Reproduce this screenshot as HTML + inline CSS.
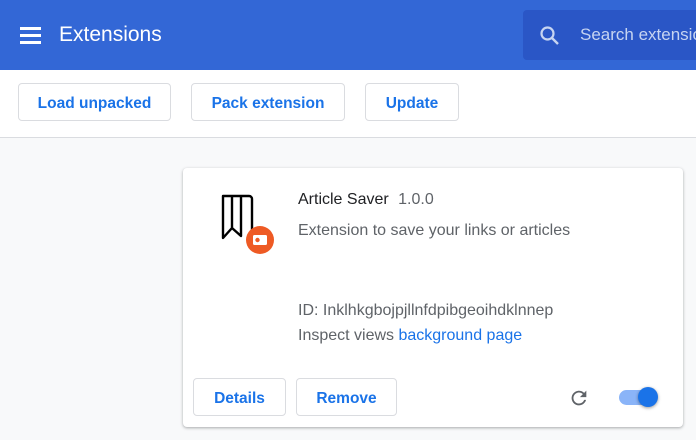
<!DOCTYPE html><html><head><style>
body{margin:0;width:696px;height:440px;overflow:hidden;background:#f8f9fa;font-family:"Liberation Sans",sans-serif;position:relative}
.hd{position:absolute;left:0;top:0;width:696px;height:70px;background:#3367d6}
.ttl{position:absolute;left:59px;top:23px;color:#fff;font-size:21px}
.sb{position:absolute;left:523px;top:10px;width:200px;height:50px;background:#2a56c6;border-radius:4px}
.sb span{position:absolute;left:57px;top:15px;color:#c6d4f1;font-size:17px;white-space:nowrap}
.tb{position:absolute;left:0;top:70px;width:696px;height:67px;background:#fff;border-bottom:1px solid #dadce0}
.btn{position:absolute;height:38px;border:1px solid #dadce0;border-radius:4px;background:#fff;color:#1a73e8;font-size:15.5px;font-weight:bold;text-align:center;line-height:39px;box-sizing:border-box}
.card{position:absolute;left:183px;top:168px;width:500px;height:259px;background:#fff;border-radius:4px;box-shadow:0 1px 3px rgba(60,64,67,.3),0 1px 2px rgba(60,64,67,.15)}
.t{position:absolute;font-size:16px;color:#5f6368;white-space:nowrap}
</style></head><body>
<div class="hd">
<div style="position:absolute;left:20px;top:27px;width:21px;height:3px;background:#fff;box-shadow:0 7px 0 #fff,0 14px 0 #fff"></div>
<div class="ttl">Extensions</div>
<div class="sb"><svg style="position:absolute;left:16px;top:15px" width="22" height="22" viewBox="0 0 22 22"><circle cx="8.5" cy="8.5" r="6" fill="none" stroke="#c6d4f1" stroke-width="2.2"/><path d="M13 13l6 6" stroke="#c6d4f1" stroke-width="2.4"/></svg><span>Search extensions</span></div>
</div>
<div class="tb">
<div class="btn" style="left:18px;top:13px;width:153px;">Load unpacked</div>
<div class="btn" style="left:191px;top:13px;width:154px;">Pack extension</div>
<div class="btn" style="left:365px;top:13px;width:94px;">Update</div>
</div>
<div class="card">
<svg style="position:absolute;left:36px;top:24px" width="60" height="64" viewBox="0 0 60 64"><path d="M4 4h26a3 3 0 0 1 3 3v34M4 4v42l9-10l9 8V4M13 4v32" fill="none" stroke="#000" stroke-width="2.4" stroke-linejoin="round" stroke-linecap="round"/><circle cx="41" cy="48" r="14" fill="#ee5a24"/><rect x="34" y="43" width="14" height="10" rx="1.5" fill="#fff"/><circle cx="38.5" cy="48" r="2.2" fill="#ee5a24"/></svg>
<div class="t" style="left:115px;top:23px;color:#202124">Article Saver <span style="color:#5f6368;margin-left:5px">1.0.0</span></div>
<div class="t" style="left:115px;top:54px">Extension to save your links or articles</div>
<div class="t" style="left:115px;top:134px">ID: Inklhkgbojpjllnfdpibgeoihdklnnep</div>
<div class="t" style="left:115px;top:159px">Inspect views <span style="color:#1a73e8">background page</span></div>
<div class="btn" style="left:10px;top:210px;width:93px">Details</div>
<div class="btn" style="left:113px;top:210px;width:101px">Remove</div>
<svg style="position:absolute;left:385px;top:219px" width="22" height="22" viewBox="0 0 24 24"><path d="M17.6 6.4A8 8 0 1 0 19.7 14h-2.1A6 6 0 1 1 16.2 7.8L13 11h7V4z" fill="#5f6368"/></svg>
<div style="position:absolute;left:436px;top:222px;width:34px;height:15px;border-radius:8px;background:#8ab4f8"></div>
<div style="position:absolute;left:455px;top:219px;width:20px;height:20px;border-radius:50%;background:#1a73e8;box-shadow:0 1px 3px rgba(0,0,0,.4)"></div>
</div>
</body></html>
